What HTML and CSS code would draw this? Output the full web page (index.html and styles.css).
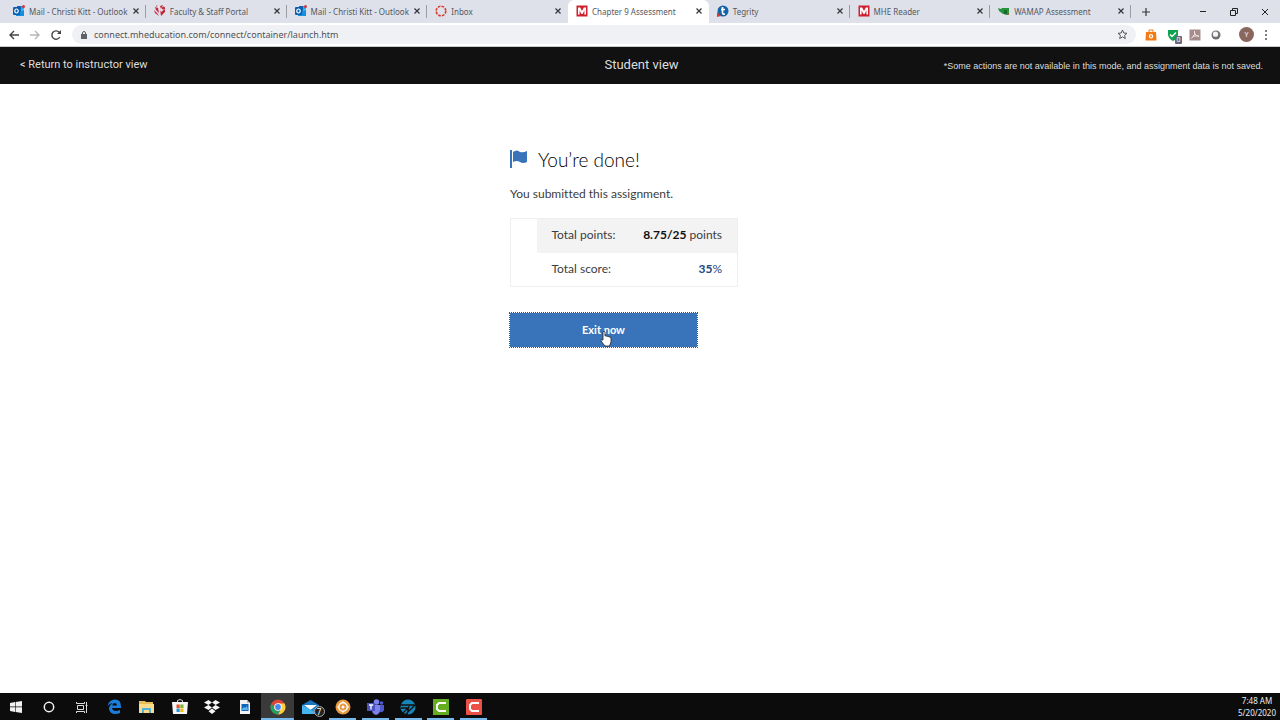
FILE: index.html
```html
<!DOCTYPE html>
<html lang="en">
<head>
    <meta charset="UTF-8">
    <meta name="viewport" content="width=device-width, initial-scale=1.0">
    <title>Chapter 9 Assessment</title>
    <link rel="stylesheet" href="styles.css">
</head>
<body>
    <!-- Shared icons -->
    <svg class="sprite" aria-hidden="true">
        <symbol id="outlook" viewBox="0 0 12 12">
            <path fill="#28a8ea" d="M4 1h7v9H4z"/>
            <path fill="#0f64b8" d="M4 1h4v5H4z"/>
            <path fill="#50d9ff" d="M8 5l3-1v3H8z"/>
            <path fill="#1490df" d="M3 7l8-2v6H3z"/>
            <rect fill="#0a5eb0" y="2" width="7" height="8" rx="1"/>
            <ellipse cx="3.5" cy="6" rx="1.7" ry="2" fill="none" stroke="#fff" stroke-width="1.2"/>
            <circle fill="#d8343a" cx="10.5" cy="1.5" r="1.5"/>
        </symbol>
        <symbol id="mhe" viewBox="0 0 12 12">
            <path fill="#cf202e" d="M.5.5h11v11H.5z"/>
            <path fill="#fff" d="M2 2.500h2.200L6 6l1.800-3.500H10v7H8.400V5.500L6.600 9H5.400L3.600 5.500v4H2z"/>
        </symbol>
        <symbol id="close" viewBox="0 0 8 8">
            <path fill="none" stroke="#33363b" stroke-width="1.2" d="M1.500 1.500l5 5m0-5l-5 5"/>
        </symbol>
    </svg>

    <header class="browser">
        <div class="tab-strip">
            <nav class="tabs" aria-label="Tabs">
                <div class="tab">
                    <svg class="favicon"><use href="#outlook"/></svg>
                    <a href="#">Mail - Christi Kitt - Outlook</a>
                    <button aria-label="Close tab"><svg class="close"><use href="#close"/></svg></button>
                </div>
                <div class="tab">
                    <svg class="favicon" viewBox="0 0 12 12" fill="#c4263c">
                        <path d="M1 2l3 1 1 5-3-3zM0 5l3 3 2 3-4-3zM6 1l3-1-2 4zM7 7l4-3v3l-4 4z"/>
                        <circle cx="9.500" cy="3" r="1.600"/>
                        <path d="M2 0l2 1-2 1zM6 5l1 2-1 4z" opacity=".6"/>
                    </svg>
                    <a href="#">Faculty &amp; Staff Portal</a>
                    <button aria-label="Close tab"><svg class="close"><use href="#close"/></svg></button>
                </div>
                <div class="tab">
                    <svg class="favicon"><use href="#outlook"/></svg>
                    <a href="#">Mail - Christi Kitt - Outlook</a>
                    <button aria-label="Close tab"><svg class="close"><use href="#close"/></svg></button>
                </div>
                <div class="tab">
                    <svg class="favicon" viewBox="0 0 12 12">
                        <circle cx="6" cy="6" r="4.800" fill="none" stroke="#d9382c" stroke-width="1.600" stroke-dasharray="2.600 1.170"/>
                    </svg>
                    <a href="#">Inbox</a>
                    <button aria-label="Close tab"><svg class="close"><use href="#close"/></svg></button>
                </div>
                <div class="tab active">
                    <svg class="favicon"><use href="#mhe"/></svg>
                    <a href="#" aria-current="page">Chapter 9 Assessment</a>
                    <button aria-label="Close tab"><svg class="close"><use href="#close"/></svg></button>
                </div>
                <div class="tab">
                    <svg class="favicon" viewBox="0 0 12 12">
                        <circle cx="6" cy="6" r="5.500" fill="#1464a8"/>
                        <path fill="#d9382c" d="M0 7l4 4-4 1z"/>
                        <path fill="none" stroke="#fff" stroke-width="1.700" d="M5.500 2v6q0 1.500 2.500 1M4 4.500h4"/>
                    </svg>
                    <a href="#">Tegrity</a>
                    <button aria-label="Close tab"><svg class="close"><use href="#close"/></svg></button>
                </div>
                <div class="tab">
                    <svg class="favicon"><use href="#mhe"/></svg>
                    <a href="#">MHE Reader</a>
                    <button aria-label="Close tab"><svg class="close"><use href="#close"/></svg></button>
                </div>
                <div class="tab">
                    <svg class="favicon" viewBox="0 0 12 12">
                        <path fill="#27933d" d="M0 3l3 1 1-1 7 0v7L5 9 1 6z"/>
                        <path fill="#176b2b" d="M6 5h3v3l2 2-5-1z"/>
                        <path fill="#8b6a2a" d="M9 8h2v2H9z"/>
                    </svg>
                    <a href="#">WAMAP Assessment</a>
                    <button aria-label="Close tab"><svg class="close"><use href="#close"/></svg></button>
                </div>
            </nav>
            <div class="window-controls">
                <button class="new-tab" aria-label="New tab">
                    <svg width="10" height="10" viewBox="0 0 10 10"><path stroke="#33363b" stroke-width="1.200" d="M5 1v8M1 5h8"/></svg>
                </button>
                <button aria-label="Minimize">
                    <svg width="8" height="8" viewBox="0 0 8 8"><path stroke="#222" d="M1 3.500h6"/></svg>
                </button>
                <button aria-label="Restore">
                    <svg width="8" height="8" viewBox="0 0 8 8"><path fill="none" stroke="#222" d="M.5 2.500h5v5h-5zM2.500 2V.5h5v5H6"/></svg>
                </button>
                <button aria-label="Close window">
                    <svg width="8" height="8" viewBox="0 0 8 8"><path stroke="#222" d="M1 1l6 6m0-6l-6 6"/></svg>
                </button>
            </div>
        </div>
        <div class="toolbar">
            <button aria-label="Back"><svg width="12" height="12" viewBox="0 0 12 12"><path fill="none" stroke="#444" stroke-width="1.400" d="M11 6H2m4-4L2 6l4 4"/></svg></button>
            <button aria-label="Forward"><svg width="12" height="12" viewBox="0 0 12 12"><path fill="none" stroke="#b4b6b9" stroke-width="1.400" d="M1 6h9M6 2l4 4-4 4"/></svg></button>
            <button aria-label="Reload"><svg width="12" height="12" viewBox="0 0 12 12"><path fill="none" stroke="#444" stroke-width="1.400" d="M9.800 8A4.200 4.200 0 1 1 9.200 3.200"/><path fill="#444" d="M11 1v4H7z"/></svg></button>
            <div class="address">
                <svg width="8" height="10" viewBox="0 0 8 10"><path fill="#5f6368" d="M1 4h6v5H1z"/><path fill="none" stroke="#5f6368" d="M2.500 4.500V3a1.500 1.500 0 0 1 3 0v1.500"/></svg>
                <input type="text" aria-label="Address" value="connect.mheducation.com/connect/container/launch.htm">
                <button aria-label="Bookmark"><svg width="11" height="11" viewBox="0 0 11 11"><path fill="none" stroke="#555" d="M5.500 1l1.300 3 3.200.3-2.400 2.100.7 3.200-2.800-1.700-2.800 1.700.7-3.200L1 4.300 4.200 4z"/></svg></button>
            </div>
            <div class="extensions">
                <button aria-label="Shopping assistant"><svg width="12" height="12" viewBox="0 0 12 12"><path fill="none" stroke="#f47b14" d="M4 3.500V1h4v2.500"/><path fill="#f47b14" d="M1 3h10l.5 8.500H.5z"/><circle cx="6" cy="7.300" r="1.600" fill="none" stroke="#fff" stroke-width="1.200"/></svg></button>
                <button class="shield" aria-label="Site safety"><svg width="12" height="12" viewBox="0 0 12 12"><path fill="#12a150" d="M1 1h10v5q-1 4-5 6-4-2-5-6z"/><path fill="none" stroke="#fff" stroke-width="1.400" d="M3 5.500l2 2 4-4"/></svg><span class="count">0</span></button>
                <button aria-label="PDF"><svg width="12" height="12" viewBox="0 0 12 12"><path fill="#a58d8d" d="M.5.5h11v11H.5z"/><path fill="none" stroke="#eee4e4" d="M5.500 2q1.500 3-3 7.500M5.500 4q1 3 4.500 3.500M4 7.500q3-1 6-.5"/></svg></button>
                <button aria-label="Extension"><svg width="10" height="10" viewBox="0 0 10 10"><circle cx="5" cy="5" r="4.500" fill="#6e7073"/><circle cx="4.500" cy="4.200" r="2.600" fill="#f4f4f4"/></svg></button>
                <button class="avatar" aria-label="Profile Y">Y</button>
                <button aria-label="Menu"><svg width="4" height="12" viewBox="0 0 4 12" fill="#555"><circle cx="2" cy="2" r="1"/><circle cx="2" cy="6" r="1"/><circle cx="2" cy="10" r="1"/></svg></button>
            </div>
        </div>
    </header>

    <div class="student-bar">
        <a href="#">&lt; Return to instructor view</a>
        <h1>Student view</h1>
        <p>*Some actions are not available in this mode, and assignment data is not saved.</p>
    </div>

    <main class="result">
        <div class="heading">
            <svg width="18" height="18" viewBox="0 0 18 18" fill="#3973b9"><path d="M0 0h2v18H0zM3 2q4-3 7 0 3 1 7-1v11q-4 2-7 0-3-2-7 0z"/></svg>
            <h2>You’re done!</h2>
        </div>
        <p>You submitted this assignment.</p>
        <table class="score">
            <tr>
                <td class="spacer" rowspan="2"></td>
                <th scope="row">Total points:</th>
                <td><strong>8.75/25</strong> points</td>
            </tr>
            <tr>
                <th scope="row">Total score:</th>
                <td class="percent"><strong>35</strong>%</td>
            </tr>
        </table>
        <button class="exit">
            Exit now
            <svg class="pointer" width="12" height="17" viewBox="0 0 12 17"><path fill="#fff" stroke="#222" stroke-width=".8" d="M3 10V2q1-2 2 0v4q1-1 2 .5 1-1 2 .5 2-.5 2 1v4l-1.500 4H5L1 11q-.5-2 2-1z"/></svg>
        </button>
    </main>

    <footer class="taskbar">
        <div class="apps">
            <button aria-label="Start"><svg width="12" height="12" viewBox="0 0 12 12" fill="#f2f2f2"><path d="M0 2l5-1v4.600H0zM5.600 1L12 0v5.600H5.600zM0 6.300h5V11l-5-1zM5.600 6.300H12V12l-6.400-1z"/></svg></button>
            <button aria-label="Search"><svg width="12" height="12" viewBox="0 0 12 12"><circle cx="6" cy="6" r="4.700" fill="none" stroke="#f2f2f2" stroke-width="1.500"/></svg></button>
            <button aria-label="Task view"><svg width="12" height="12" viewBox="0 0 12 12" fill="none" stroke="#ddd"><path d="M1.500 4.500h6v4h-6zM.5 1v1.500h8V1M.5 12v-1.500h8V12M10.500 1v11"/><path fill="#ddd" d="M10 4h1v1h-1z"/></svg></button>
            <button aria-label="Edge"><svg width="15" height="15" viewBox="0 0 15 15"><path fill="#1a7ddb" d="M.5 7Q2 .5 8 .5q6 0 6 7V9H5q.5 3 4 3 2 0 4-1v3q-2 1-5 1-5 0-6-5 0-4 4-6-3 0-5.500 3zm4.700-.5H10Q10 4 8 4 5.500 4 5.200 6.500z"/></svg></button>
            <button aria-label="File Explorer"><svg width="15" height="14" viewBox="0 0 15 14"><path fill="#e8bd55" d="M0 1h6l1 1h7v10H0z"/><path fill="#fadb8a" d="M0 4h15v9H0z"/><path fill="#4cb4df" d="M3 8h9v5h-2v-3H5v3H3z"/></svg></button>
            <button aria-label="Store"><svg width="16" height="16" viewBox="0 0 16 16"><path fill="none" stroke="#ddd" d="M5.500 4V1.500q2.500-2 5 0V4"/><path fill="#f5f5f5" d="M0 3h16l-1 12H1z"/><path fill="#e5512b" d="M4.500 5.500H7.700v3.500H4.500z"/><path fill="#7eb72c" d="M8.300 5.500h3.200v3.500H8.300z"/><path fill="#2397dc" d="M4.500 9.500h3.200v3.500H4.500z"/><path fill="#f6b71b" d="M8.300 9.500h3.200v3.500H8.300z"/></svg></button>
            <button aria-label="Dropbox"><svg width="16" height="14" viewBox="0 0 16 14" fill="#f5f5f5"><path d="M4.500 0L8 2.500 4.500 5 0 2.500zM11.500 0L16 2.500 11.500 5 8 2.500zM4.500 5L8 7.500 4.500 10 0 7.500zM11.500 5L16 7.500 11.500 10 8 7.500zM8 8.500l3.500 2.700L8 14l-3.500-2.800z"/></svg></button>
            <button aria-label="Picture"><svg width="12" height="14" viewBox="0 0 12 14"><path fill="#f2f2f2" d="M1 0h7l3 3v11H1z"/><path fill="#aab4bc" d="M8 0l3 3H8z"/><path fill="#1264b5" d="M2.500 4h7v7h-7z"/><path fill="#58b5ef" d="M3 9l2-2 1 1 2-2 1 4H3z"/></svg></button>
            <button class="running current" aria-label="Chrome"><svg width="16" height="16" viewBox="0 0 16 16"><circle cx="8" cy="8" r="7.500" fill="#dc4437"/><path fill="#1ea362" d="M1.500 4.200L8 15.500A7.500 7.500 0 0 1 1.500 4.200z"/><path fill="#ffcd40" d="M8 4.500h6.600A7.500 7.500 0 0 1 8 15.500l3-6z"/><path fill="#1ea362" d="M4.500 8L8 15.500l3-6z"/><circle cx="8" cy="8" r="3.800" fill="#fff"/><circle cx="8" cy="8" r="2.900" fill="#4688f1"/></svg></button>
            <button class="mail" aria-label="Mail"><svg width="17" height="14" viewBox="0 0 17 14"><path fill="#1774bd" d="M0 5l8.500-5L17 5v9H0z"/><path fill="#fff" d="M2 5h13l-6.500 5z"/><path fill="#45b4ef" d="M0 5l17 9H0z"/><path fill="#248ed6" d="M17 5v9l-8-4z"/></svg><span class="unread">7</span></button>
            <button class="running" aria-label="Support"><svg width="16" height="16" viewBox="0 0 16 16"><circle cx="8" cy="8" r="7.500" fill="#e9973d"/><g fill="none" stroke="#fff"><circle cx="8" cy="8" r="4.200" stroke-width="1.400"/><path d="M8 2v2M8 12v2M2 8h2M12 8h2"/></g><circle cx="8" cy="8" r="1.500" fill="#fff"/></svg></button>
            <button class="running" aria-label="Teams"><svg width="17" height="16" viewBox="0 0 17 16"><circle cx="9.500" cy="3" r="2.800" fill="#7b83eb"/><circle cx="14.500" cy="4" r="1.800" fill="#5059c9"/><path fill="#5059c9" d="M12 6h5v5q-1 3-4 2z"/><path fill="#7b83eb" d="M5 6h8v5q0 4-4 5-4-1-4-5z"/><path fill="#4b53bc" d="M0 4h8v8H0z"/><path fill="none" stroke="#fff" stroke-width="1.300" d="M2 6h4.200M4 6v4.500"/></svg></button>
            <button class="running" aria-label="Tegrity recorder"><svg width="16" height="16" viewBox="0 0 16 16"><circle cx="8" cy="8" r="7.500" fill="#1686b9"/><path fill="none" stroke="#111" stroke-width="1.300" d="M0 6h15L5 16M1 9h7l-5 5M9 7L7 16"/></svg></button>
            <button class="running" aria-label="Camtasia"><svg width="16" height="16" viewBox="0 0 16 16"><path fill="#65ae20" d="M0 0h16v16H0z"/><path fill="none" stroke="#fff" stroke-width="2" d="M12 5V4H6L4 6v4l2 2h6v-1"/></svg></button>
            <button class="running" aria-label="Camtasia recorder"><svg width="16" height="16" viewBox="0 0 16 16"><rect width="16" height="16" rx="1" fill="#ec5148"/><path fill="none" stroke="#fff" stroke-width="2" d="M12 5V4H6L4 6v4l2 2h6v-1"/></svg></button>
        </div>
        <div class="clock">
            <time>7:48 AM</time>
            <time>5/20/2020</time>
        </div>
    </footer>
</body>
</html>
```
FILE: styles.css
```css
* {
    margin: 0;
    padding: 0;
    box-sizing: border-box;
}
body {
    min-height: 100vh;
    display: flex;
    flex-direction: column;
    background-color: #fff;
    color: #3c3c3c;
    font-family: Lato, "Liberation Sans", sans-serif;
    font-size: 12px;
    font-variant-ligatures: none;
}
a {
    color: inherit;
    text-decoration: none;
}
button {
    display: flex;
    align-items: center;
    justify-content: center;
    border: none;
    background: none;
    font-family: inherit;
    cursor: pointer;
}
.sprite {
    display: none;
}

/* Browser */
.browser {
    font-family: "Noto Sans", sans-serif;
}
.tab-strip {
    display: flex;
    height: 23px;
    padding-left: 5px;
    background-color: #dee1ea;
}
.tabs {
    display: flex;
    flex: 1;
    min-width: 0;
}
.tab {
    display: flex;
    flex: 1;
    align-items: center;
    gap: 4px;
    min-width: 0;
    padding: 0 6px 1px 8px;
    font-size: 8px;
    color: #55585d;
    background: linear-gradient(#9a9da5, #9a9da5) right center / 1px 13px no-repeat;
}
.tab a {
    flex: 1;
    min-width: 0;
    white-space: nowrap;
}
.tab.active {
    background: #fff;
    border-radius: 6px 6px 0 0;
}
.tab:has(+ .active) {
    background: none;
}
.favicon {
    width: 12px;
    height: 12px;
    flex-shrink: 0;
}
.close {
    width: 8px;
    height: 8px;
}
.window-controls {
    display: grid;
    grid-template-columns: 56px 31px 31px 31px;
    height: 20px;
}
.new-tab {
    width: 30px;
    height: 23px;
}
.toolbar {
    display: flex;
    align-items: center;
    height: 24px;
    padding: 0 12px 0 8px;
    gap: 9px;
    border-bottom: 1px solid #c9cbcd;
}
.address {
    display: flex;
    flex: 1;
    align-items: center;
    gap: 6px;
    height: 19px;
    margin-left: 1px;
    padding: 0 8px;
    border-radius: 10px;
    background-color: #f0f1f4;
}
.address input {
    flex: 1;
    min-width: 0;
    border: none;
    outline: none;
    background: none;
    color: #505256;
    font-family: inherit;
    font-size: 9px;
}
.extensions {
    display: flex;
    align-items: center;
    gap: 10px;
}
.shield {
    position: relative;
}
.count {
    position: absolute;
    right: -3px;
    bottom: -3px;
    width: 7px;
    border-radius: 1px;
    background-color: #686a79;
    color: #fff;
    font-size: 7px;
    line-height: 8px;
}
.avatar {
    width: 15px;
    height: 15px;
    margin-left: 8px;
    border-radius: 50%;
    background-color: #8a675e;
    color: #fff;
    font-size: 7px;
}

/* Student view bar */
.student-bar {
    display: grid;
    grid-template-columns: 1fr auto 1fr;
    align-items: center;
    height: 37px;
    padding: 0 17px 3px 20px;
    background-color: #111;
    color: #ddd;
    font-family: Roboto, "Liberation Sans", sans-serif;
    font-size: 11px;
}
.student-bar h1 {
    font-size: 13px;
    font-weight: 400;
}
.student-bar p {
    padding-top: 4px;
    text-align: right;
    font-family: "Liberation Sans", sans-serif;
    font-size: 9px;
}

/* Result */
.result {
    flex: 1;
    width: 260px;
    margin: 0 auto;
    padding-top: 63px;
}
.heading {
    display: flex;
    align-items: center;
    gap: 10px;
    height: 24px;
    margin-bottom: 13px;
}
.heading h2 {
    color: #000;
    font-size: 19px;
    font-weight: 300;
}
.result p {
    line-height: 20px;
    margin-bottom: 14px;
}
.score {
    width: 228px;
    margin-bottom: 25px;
    border: 1px solid #eee;
    border-collapse: collapse;
}
.score th, .score td {
    height: 34px;
    padding: 0 15px 2px;
    font-weight: 400;
    text-align: left;
}
.score td {
    padding-left: 0;
    text-align: right;
}
.score .spacer {
    width: 26px;
    padding: 0;
}
.score tr:first-child :not(.spacer, strong) {
    background-color: #f3f3f3;
}
.score strong {
    color: #111;
}
.score .percent, .score .percent strong {
    color: #1d467f;
}
.exit {
    position: relative;
    width: 189px;
    height: 36px;
    margin-left: -1px;
    padding-bottom: 2px;
    border: 1px dotted #245b9c;
    background-color: #3973b9;
    background-clip: padding-box;
    color: #fff;
    font-size: 11px;
    font-weight: 700;
}
.pointer {
    position: absolute;
    left: 90px;
    top: 17px;
}

/* Taskbar */
.taskbar {
    display: flex;
    justify-content: space-between;
    height: 27px;
    background-color: #0c0c0c;
    color: #eee;
    font-family: "Noto Sans", sans-serif;
}
.apps {
    display: grid;
    grid-template-columns: repeat(15, 1fr);
    width: 490px;
}
.apps button {
    position: relative;
}
.running {
    background: linear-gradient(#76b9ed, #76b9ed) center bottom / 27px 2px no-repeat;
}
.running.current {
    background-color: #3a3a3a;
    background-size: 100% 2px;
}
.unread {
    position: absolute;
    right: 2px;
    bottom: 3px;
    width: 11px;
    border: 1px solid #aaa;
    border-radius: 50%;
    background-color: #222;
    color: #fff;
    font-size: 8px;
    line-height: 9px;
}
.clock {
    display: flex;
    flex-direction: column;
    justify-content: center;
    padding-right: 4px;
    font-size: 8px;
    line-height: 12px;
    text-align: center;
}
```
